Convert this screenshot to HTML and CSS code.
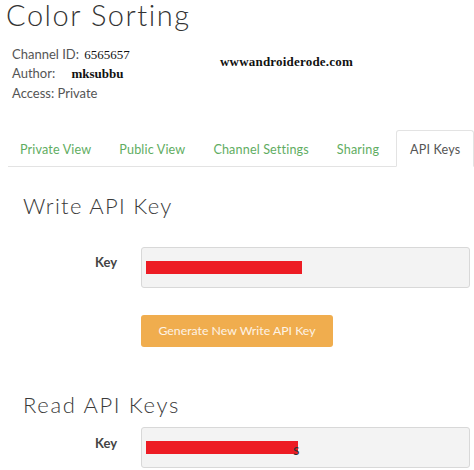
FILE: index.html
```html
<!DOCTYPE html>
<html>
<head>
<meta charset="utf-8">
<link rel="stylesheet" href="styles.css">
</head>
<body>
<div class="page">
  <h1 class="title">Color Sorting</h1>
  <div class="meta-row">
    <div class="meta">
      <div class="meta-line">Channel ID: <span class="serif id">6565657</span></div>
      <div class="meta-line">Author: <span class="serif author">mksubbu</span></div>
      <div class="meta-line">Access: Private</div>
    </div>
    <div class="serif watermark">wwwandroiderode.com</div>
  </div>
  <ul class="tabs">
    <li class="tab">Private View</li>
    <li class="tab">Public View</li>
    <li class="tab">Channel Settings</li>
    <li class="tab">Sharing</li>
    <li class="tab active">API Keys</li>
  </ul>
  <section class="section write">
    <h2 class="heading">Write API Key</h2>
    <div class="field">
      <label class="label">Key</label>
      <div class="input"><span class="redact" style="width:156px"></span></div>
    </div>
    <div class="actions">
      <button class="btn">Generate New Write API Key</button>
    </div>
  </section>
  <section class="section read">
    <h2 class="heading">Read API Keys</h2>
    <div class="field">
      <label class="label">Key</label>
      <div class="input"><span class="redact" style="width:152px"></span><span class="tail">s</span></div>
    </div>
  </section>
</div>
</body>
</html>
```

FILE: styles.css
```css
* { box-sizing: border-box; }
html, body { margin: 0; padding: 0; background: #fff; }
body { font-family: "Lato", "Open Sans", sans-serif; color: #555; overflow: hidden; }
.page { width: 474px; height: 470px; overflow: hidden; }
.title {
  margin: 0;
  padding-left: 6px;
  font-family: "Lato", sans-serif;
  font-weight: 300;
  font-size: 29px;
  line-height: 30px;
  color: #333;
  letter-spacing: 1.55px;
}
.meta-row { display: flex; align-items: flex-start; padding: 14.5px 0 0 12px; }
.meta { width: 208px; font-size: 13px; line-height: 19.5px; color: #555; }
.serif { font-family: "Liberation Serif", serif; color: #111; }
.id { font-size: 13px; margin-left: 2px; }
.author { font-weight: bold; font-size: 13px; margin-left: 13px; }
.watermark { font-weight: bold; font-size: 13px; padding-top: 9px; letter-spacing: 0.2px; }
.tabs {
  list-style: none;
  margin: 27px 0 0 8px;
  padding: 0;
  display: flex;
  align-items: flex-start;
  border-bottom: 1px solid #e3e3e3;
  height: 37px;
}
.tab {
  padding: 12px 14px 0 14px;
  font-size: 12.6px;
  line-height: 16px;
  letter-spacing: 0.15px;
  color: #5fad62;
  white-space: nowrap;
}
.tab:first-child { padding-left: 12px; }
.tab.active {
  color: #555;
  border: 1px solid #e3e3e3;
  border-bottom-color: #fff;
  border-radius: 3px 3px 0 0;
  height: 37px;
  padding: 11px 13px 0 13px;
  margin-left: 3px;
}
.section { padding-left: 23px; }
.heading {
  margin: 0;
  font-weight: 300;
  font-size: 22px;
  line-height: 26px;
  color: #3a3a3a;
  letter-spacing: 1.3px;
}
.write .heading { padding-top: 25.5px; }
.field { display: flex; align-items: flex-start; }
.write .field { margin-top: 28.5px; }
.label { width: 118px; padding-left: 72px; padding-top: 7px; font-weight: bold; font-size: 13px; line-height: 16px; color: #444; }
.input {
  width: 329px;
  height: 41px;
  background: #f3f3f3;
  border: 1px solid #d8d8d8;
  border-radius: 3px;
  display: flex;
  align-items: center;
  padding-left: 4px;
}
.redact { display: block; height: 13px; background: #ed1c24; }
.tail { font-size: 15px; color: #333; margin-left: -5px; margin-top: 3px; }
.actions { padding-left: 118px; margin-top: 26.5px; }
.btn {
  display: block;
  width: 192px;
  height: 32px;
  border: none;
  border-radius: 3px;
  background: #f0ad4e;
  color: #fdf3e6;
  font-family: "Lato", sans-serif;
  font-size: 12.3px;
  padding: 0;
}
.read .heading { padding-top: 45px; letter-spacing: 1.65px; }
.read .field { margin-top: 9px; }
.read .label { padding-top: 8px; }
```
